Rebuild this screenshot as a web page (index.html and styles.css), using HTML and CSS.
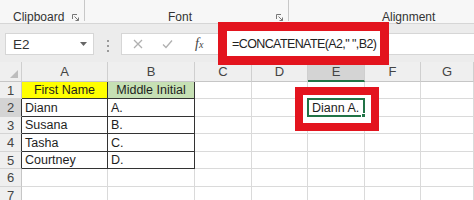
FILE: index.html
```html
<!DOCTYPE html>
<html>
<head>
<meta charset="utf-8">
<link rel="stylesheet" href="styles.css">
</head>
<body>
<div class="app">
  <div class="ribbon">
    <div class="group g-clip">
      <span class="glabel">Clipboard</span>
      <svg class="launcher" width="7" height="7" viewBox="0 0 7 7"><path d="M0.5 5V0.5H5" fill="none" stroke="#777" stroke-width="1"/><path d="M2.5 2.5L6.5 6.5M6.5 3.5V6.5H3.5" fill="none" stroke="#777" stroke-width="1"/></svg>
    </div>
    <div class="group g-font">
      <span class="glabel">Font</span>
      <svg class="launcher" width="7" height="7" viewBox="0 0 7 7"><path d="M0.5 5V0.5H5" fill="none" stroke="#777" stroke-width="1"/><path d="M2.5 2.5L6.5 6.5M6.5 3.5V6.5H3.5" fill="none" stroke="#777" stroke-width="1"/></svg>
    </div>
    <div class="group g-align">
      <span class="glabel">Alignment</span>
    </div>
  </div>

  <div class="fbar">
    <div class="namebox">
      <span class="name">E2</span>
      <svg class="dd" width="7" height="4" viewBox="0 0 7 4"><path d="M0 0H7L3.5 4Z" fill="#666"/></svg>
    </div>
    <div class="grip"><i></i><i></i><i></i></div>
    <div class="finput">
      <div class="ficons">
        <svg class="ic-x" width="10" height="10" viewBox="0 0 10 10"><path d="M1 1L9 9M9 1L1 9" stroke="#b0b0b0" stroke-width="1.3" fill="none"/></svg>
        <svg class="ic-ok" width="11" height="10" viewBox="0 0 11 10"><path d="M1 5.5L4 8.5L10 1.5" stroke="#b0b0b0" stroke-width="1.3" fill="none"/></svg>
        <span class="fx"><i>f</i><span class="fxx">x</span></span>
      </div>
      <span class="ftext">=CONCATENATE(A2," ",B2)</span>
    </div>
    <div class="mark mark-formula"></div>
  </div>

  <div class="sheet">
    <div class="corner"><svg width="8" height="8" viewBox="0 0 8 8"><path d="M8 0V8H0Z" fill="#bdbdbd"/></svg></div>
    <div class="ch">A</div>
    <div class="ch">B</div>
    <div class="ch">C</div>
    <div class="ch">D</div>
    <div class="ch ch-sel">E</div>
    <div class="ch">F</div>
    <div class="ch">G</div>

    <div class="rh">1</div>
    <div class="c t hd-yellow">First Name</div>
    <div class="c t hd-green">Middle Initial</div>
    <div class="c"></div><div class="c"></div><div class="c"></div><div class="c"></div><div class="c"></div>

    <div class="rh rh-sel rh-t">2</div>
    <div class="c t">Diann</div>
    <div class="c t">A.</div>
    <div class="c"></div><div class="c"></div>
    <div class="c cell-sel">Diann A.<span class="handle"></span></div>
    <div class="c"></div><div class="c"></div>

    <div class="rh rh-t">3</div>
    <div class="c t">Susana</div>
    <div class="c t">B.</div>
    <div class="c"></div><div class="c"></div><div class="c"></div><div class="c"></div><div class="c"></div>

    <div class="rh rh-t">4</div>
    <div class="c t">Tasha</div>
    <div class="c t">C.</div>
    <div class="c"></div><div class="c"></div><div class="c"></div><div class="c"></div><div class="c"></div>

    <div class="rh rh-t">5</div>
    <div class="c t">Courtney</div>
    <div class="c t">D.</div>
    <div class="c"></div><div class="c"></div><div class="c"></div><div class="c"></div><div class="c"></div>

    <div class="rh">6</div>
    <div class="c"></div><div class="c"></div><div class="c"></div><div class="c"></div><div class="c"></div><div class="c"></div><div class="c"></div>

    <div class="rh">7</div>
    <div class="c"></div><div class="c"></div><div class="c"></div><div class="c"></div><div class="c"></div><div class="c"></div><div class="c"></div>

    <div class="mark mark-cell"></div>
  </div>
</div>
</body>
</html>
```

FILE: styles.css
```css
* { box-sizing: border-box; }

html, body {
  margin: 0;
  padding: 0;
  background: #ffffff;
}

.app {
  position: relative;
  width: 474px;
  height: 200px;
  overflow: hidden;
  font-family: "Liberation Sans", Arial, sans-serif;
  color: #222;
}

/* Ribbon */
.ribbon {
  display: flex;
  align-items: flex-start;
  height: 24px;
  background: #f7f7f7;
  border-bottom: 1px solid #d6d6d6;
}

.group {
  display: flex;
  align-items: center;
  height: 21px;
  padding-top: 12px;
}

.g-clip {
  width: 85px;
  padding-left: 13px;
  border-right: 1px solid #c8c8c8;
}

.g-font {
  width: 204px;
  padding-left: 83px;
  border-right: 1px solid #c8c8c8;
}

.g-align {
  flex: 1;
  padding-left: 93px;
}

.glabel {
  font-size: 12px;
  line-height: 14px;
  color: #333;
}

.launcher {
  margin-left: auto;
  margin-right: 5px;
  margin-top: 1px;
}

/* Formula bar */
.fbar {
  position: relative;
  display: flex;
  align-items: flex-start;
  height: 38px;
  padding: 9px 0 0 5px;
  background: #ececec;
}

.namebox {
  display: flex;
  align-items: center;
  width: 89px;
  height: 22px;
  padding: 0 6px 0 7px;
  background: #fff;
  border: 1px solid #d6d6d6;
}

.name {
  font-size: 13.5px;
  color: #333;
}

.dd {
  margin-left: auto;
}

.grip {
  display: flex;
  flex-direction: column;
  align-items: center;
  gap: 3px;
  width: 27px;
  padding-top: 7px;
}

.grip i {
  display: block;
  width: 2px;
  height: 2px;
  background: #9a9a9a;
}

.finput {
  flex: 1;
  display: flex;
  align-items: center;
  height: 22px;
  background: #fff;
  border: 1px solid #d6d6d6;
  border-right: 0;
}

.ficons {
  display: flex;
  align-items: center;
  width: 97px;
  padding-left: 11px;
}

.ic-ok {
  margin-left: 19px;
}

.fx {
  margin-left: 22px;
  font-family: "Liberation Serif", "Times New Roman", serif;
  font-size: 14px;
  color: #444;
}

.fxx {
  font-style: italic;
  font-size: 10px;
}

.ftext {
  position: relative;
  z-index: 2;
  padding-left: 13px;
  font-size: 12.5px;
  letter-spacing: -0.6px;
  color: #222;
  white-space: nowrap;
}

/* annotation boxes */
.mark {
  position: absolute;
  z-index: 1;
  background: #fff;
  border: 9px solid #e3141e;
}

.mark-formula {
  left: 218px;
  top: -2px;
  width: 171px;
  height: 43px;
}

.mark-cell {
  left: 295px;
  top: 25px;
  width: 84px;
  height: 44px;
  border-width: 8px;
}

/* Sheet */
.sheet {
  position: relative;
  display: grid;
  grid-template-columns: 22px 86px 87px 57px 56px 57px 56px 53px;
  grid-template-rows: 20px 17px 18px 17px 18px 17px 18px 17px;
  font-size: 12.5px;
}

.corner {
  display: flex;
  align-items: flex-end;
  justify-content: flex-end;
  padding: 0 3px 3px 0;
  background: #efefef;
  border-right: 1px solid #cfcfcf;
  border-bottom: 1px solid #c6c6c6;
}

.ch {
  display: flex;
  align-items: center;
  justify-content: center;
  font-size: 13px;
  background: #efefef;
  color: #444;
  border-right: 1px solid #cfcfcf;
  border-bottom: 1px solid #c6c6c6;
}

.ch-sel {
  background: #d4d4d4;
  border-bottom: 2px solid #217346;
}

.rh {
  display: flex;
  align-items: center;
  justify-content: center;
  font-size: 13px;
  background: #efefef;
  color: #444;
  border-right: 1px solid #c6c6c6;
  border-bottom: 1px solid #d4d4d4;
}

.rh-t {
  border-right-color: #333;
}

.rh-sel {
  background: #d4d4d4;
}

.c {
  display: flex;
  align-items: center;
  padding-left: 3px;
  white-space: nowrap;
  border-right: 1px solid #dadada;
  border-bottom: 1px solid #dadada;
  color: #1e1e1e;
}

.c.t {
  border-right-color: #333;
  border-bottom-color: #333;
}

.hd-yellow {
  justify-content: center;
  padding-left: 0;
  background: #ffff00;
}

.hd-green {
  justify-content: center;
  padding-left: 0;
  background: #c6e0b4;
}

.cell-sel {
  position: relative;
  z-index: 2;
  border: 2px solid #217346;
  margin: -1px 0 0 -1px;
  padding-left: 3px;
}

.handle {
  position: absolute;
  right: -3px;
  bottom: -3px;
  width: 5px;
  height: 5px;
  background: #217346;
  border: 1px solid #fff;
}
```
